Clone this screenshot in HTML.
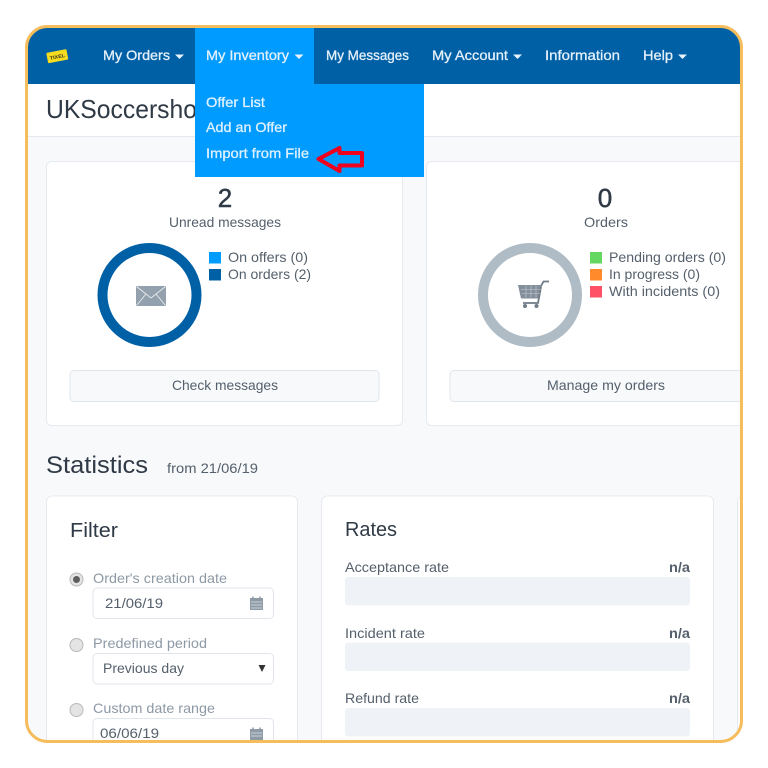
<!DOCTYPE html>
<html lang="en">
<head>
<meta charset="utf-8">
<title>My Inventory</title>
<style>
html,body{margin:0;padding:0;background:#fff;width:768px;height:768px;overflow:hidden}
svg{display:block}
text{font-family:"Liberation Sans",sans-serif}
.soft{filter:blur(.35px)}
.nav{fill:#e4f0fa;font-size:14px;stroke:#e4f0fa;stroke-width:.3px}
.sub{fill:#dff1ff;font-size:14px;stroke:#dff1ff;stroke-width:.3px}
.body{fill:#55606c;font-size:14px}
.lab{fill:#8d99a5;font-size:14px}
.dark{fill:#2f3a46}
.num{fill:#2f3a46;stroke:#2f3a46;stroke-width:.5px}
</style>
</head>
<body>
<svg width="768" height="768" viewBox="0 0 768 768" xmlns="http://www.w3.org/2000/svg">
<defs>
<clipPath id="frame"><rect x="26.500" y="26.500" width="715" height="715" rx="21"/></clipPath>
</defs>
<g clip-path="url(#frame)">
<g class="soft">
<rect x="25" y="25" width="718" height="718" fill="#f7f9fb"/>
<rect x="25" y="84" width="718" height="52" fill="#fff"/>
<rect x="25" y="136" width="718" height="1" fill="#e4e9f0"/>
<text x="46" y="118" font-size="26" class="dark" textLength="151" lengthAdjust="spacingAndGlyphs">UKSoccersho</text>

<!-- Nav -->
<rect x="25" y="25" width="718" height="59" fill="#0060a6"/>
<rect x="195" y="25" width="119" height="59" fill="#009bff"/>
<g transform="rotate(-11 57 56)">
<rect x="47" y="51" width="20.500" height="10.500" rx="1" fill="#f6dc1e"/>
<text x="49.500" y="58.500" font-size="5" font-weight="700" fill="#3b3a20" textLength="15.500" lengthAdjust="spacingAndGlyphs">TIXEL</text>
</g>
<text x="103" y="60" class="nav" textLength="67" lengthAdjust="spacingAndGlyphs">My Orders</text>
<path d="M175 54.500h9l-4.500 4.500z" fill="#e9f3fb"/>
<text x="206" y="60" class="nav" textLength="83" lengthAdjust="spacingAndGlyphs">My Inventory</text>
<path d="M294.500 54.500h9l-4.500 4.500z" fill="#e9f3fb"/>
<text x="326" y="60" class="nav" textLength="83" lengthAdjust="spacingAndGlyphs">My Messages</text>
<text x="432" y="60" class="nav" textLength="76" lengthAdjust="spacingAndGlyphs">My Account</text>
<path d="M513 54.500h9l-4.500 4.500z" fill="#e9f3fb"/>
<text x="545" y="60" class="nav" textLength="75" lengthAdjust="spacingAndGlyphs">Information</text>
<text x="643" y="60" class="nav" textLength="30" lengthAdjust="spacingAndGlyphs">Help</text>
<path d="M678 54.500h9l-4.500 4.500z" fill="#e9f3fb"/>

<!-- Card 1 -->
<rect x="46.500" y="161.500" width="356" height="264" rx="5" fill="#fff" stroke="#e6eaf0"/>
<!-- Dropdown -->
<rect x="195" y="84" width="229" height="93" fill="#009bff"/>
<text x="206" y="107" class="sub" textLength="59" lengthAdjust="spacingAndGlyphs">Offer List</text>
<text x="206" y="132" class="sub" textLength="81" lengthAdjust="spacingAndGlyphs">Add an Offer</text>
<text x="206" y="158" class="sub" textLength="103" lengthAdjust="spacingAndGlyphs">Import from File</text>
<path d="M318.500 159L339.500 148V153H362V165.500H339.500V171z" fill="none" stroke="#f0001c" stroke-width="4" stroke-linejoin="round"/>

<text x="225" y="207" font-size="26" text-anchor="middle" class="num">2</text>
<text x="169" y="227" class="body" textLength="112" lengthAdjust="spacingAndGlyphs">Unread messages</text>
<circle cx="149.500" cy="295" r="47" fill="none" stroke="#0060a6" stroke-width="10"/>
<rect x="136" y="286" width="30" height="20" fill="#93a1ae"/>
<path d="M136.500 286.500L151 298L165.500 286.500M136.500 305.500L146 294M165.500 305.500L156 294" fill="none" stroke="#eef1f4" stroke-width=".8"/>
<rect x="209" y="252" width="12" height="11.500" fill="#009bff"/>
<rect x="209" y="269" width="12" height="11.500" fill="#0060a6"/>
<text x="228" y="262" class="body" textLength="80" lengthAdjust="spacingAndGlyphs">On offers (0)</text>
<text x="228" y="279" class="body" textLength="83" lengthAdjust="spacingAndGlyphs">On orders (2)</text>
<rect x="70" y="370.500" width="309" height="31" rx="4" fill="#f7f9fb" stroke="#e1e6ec"/>
<text x="172" y="390" class="body" textLength="106" lengthAdjust="spacingAndGlyphs">Check messages</text>

<!-- Card 2 -->
<rect x="426.500" y="161.500" width="340" height="264" rx="5" fill="#fff" stroke="#e6eaf0"/>
<text x="605" y="207" font-size="26" text-anchor="middle" class="num">0</text>
<text x="584" y="227" class="body" textLength="44" lengthAdjust="spacingAndGlyphs">Orders</text>
<circle cx="530" cy="295" r="47" fill="none" stroke="#b0bcc5" stroke-width="10"/>
<path d="M518 285H542L539.500 298.500H521z" fill="#848f9b"/>
<path d="M541 286L543.500 281.500H549M541 287L538 303H523" fill="none" stroke="#6f7b87" stroke-width="1.800"/>
<path d="M521 289.500h20M522 293.500h18M526 285.500v12M531 285.500v12M536 285.500v12" stroke="#c3ccd4" stroke-width=".6" fill="none"/>
<circle cx="525" cy="306" r="2" fill="#6f7b87"/><circle cx="536.500" cy="306" r="2" fill="#6f7b87"/>
<rect x="590" y="252" width="12" height="11.500" fill="#63d75f"/>
<rect x="590" y="269" width="12" height="11.500" fill="#ff8a2b"/>
<rect x="590" y="286" width="12" height="11.500" fill="#ff5068"/>
<text x="609" y="262" class="body" textLength="117" lengthAdjust="spacingAndGlyphs">Pending orders (0)</text>
<text x="609" y="279" class="body" textLength="91" lengthAdjust="spacingAndGlyphs">In progress (0)</text>
<text x="609" y="296" class="body" textLength="111" lengthAdjust="spacingAndGlyphs">With incidents (0)</text>
<rect x="450" y="370.500" width="320" height="31" rx="4" fill="#f7f9fb" stroke="#e1e6ec"/>
<text x="547" y="390" class="body" textLength="118" lengthAdjust="spacingAndGlyphs">Manage my orders</text>

<!-- Statistics -->
<text x="46" y="473" font-size="24" class="dark" textLength="102" lengthAdjust="spacingAndGlyphs">Statistics</text>
<text x="167" y="473" class="body" textLength="91" lengthAdjust="spacingAndGlyphs">from 21/06/19</text>

<!-- Filter -->
<rect x="46.500" y="496" width="251" height="270" rx="6" fill="#fff" stroke="#e6eaf0"/>
<text x="70" y="537" font-size="20" class="dark" textLength="48" lengthAdjust="spacingAndGlyphs">Filter</text>
<circle cx="76.500" cy="579.500" r="6.500" fill="#e4e4e4" stroke="#b8b8b8"/>
<circle cx="76.500" cy="579.500" r="3.500" fill="#5f5f5f"/>
<text x="93" y="583" class="lab" textLength="134" lengthAdjust="spacingAndGlyphs">Order's creation date</text>
<rect x="93" y="588" width="180.500" height="30.500" rx="4" fill="#fff" stroke="#e1e6ec"/>
<text x="105" y="608" class="body" textLength="58" lengthAdjust="spacingAndGlyphs">21/06/19</text>
<rect x="250" y="598" width="13" height="12" fill="#8e9aa6"/>
<path d="M253 596.500v3M260 596.500v3" stroke="#8e9aa6" stroke-width="1.500"/>
<path d="M251 602h11M251 605h11M251 608h11" stroke="#dfe4e9" stroke-width=".7"/>
<circle cx="76.500" cy="645" r="6.500" fill="#e4e4e4" stroke="#b8b8b8"/>
<text x="93" y="648" class="lab" textLength="114" lengthAdjust="spacingAndGlyphs">Predefined period</text>
<rect x="93" y="653.500" width="180.500" height="30.500" rx="4" fill="#fff" stroke="#e1e6ec"/>
<text x="103" y="673" class="body" textLength="81" lengthAdjust="spacingAndGlyphs">Previous day</text>
<path d="M258.500 665h7l-3.500 7z" fill="#333"/>
<circle cx="76.500" cy="710" r="6.500" fill="#e4e4e4" stroke="#b8b8b8"/>
<text x="93" y="713" class="lab" textLength="122" lengthAdjust="spacingAndGlyphs">Custom date range</text>
<rect x="93" y="718.500" width="180.500" height="40" rx="4" fill="#fff" stroke="#e1e6ec"/>
<text x="100" y="738" class="body" textLength="59" lengthAdjust="spacingAndGlyphs">06/06/19</text>
<rect x="250" y="729" width="13" height="12" fill="#8e9aa6"/>
<path d="M253 727.500v3M260 727.500v3" stroke="#8e9aa6" stroke-width="1.500"/>
<path d="M251 733h11M251 736h11" stroke="#dfe4e9" stroke-width=".7"/>

<!-- Rates -->
<rect x="321.500" y="496" width="392" height="270" rx="6" fill="#fff" stroke="#e6eaf0"/>
<text x="345" y="536" font-size="20" class="dark" textLength="52" lengthAdjust="spacingAndGlyphs">Rates</text>
<text x="345" y="572" class="body" textLength="104" lengthAdjust="spacingAndGlyphs">Acceptance rate</text>
<text x="669" y="572" class="body" font-weight="700" textLength="21" lengthAdjust="spacingAndGlyphs">n/a</text>
<rect x="345" y="577" width="345" height="28.500" rx="3" fill="#eff3f7"/>
<text x="345" y="638" class="body" textLength="80" lengthAdjust="spacingAndGlyphs">Incident rate</text>
<text x="669" y="638" class="body" font-weight="700" textLength="21" lengthAdjust="spacingAndGlyphs">n/a</text>
<rect x="345" y="642.500" width="345" height="28.500" rx="3" fill="#eff3f7"/>
<text x="345" y="703" class="body" textLength="74" lengthAdjust="spacingAndGlyphs">Refund rate</text>
<text x="669" y="703" class="body" font-weight="700" textLength="21" lengthAdjust="spacingAndGlyphs">n/a</text>
<rect x="345" y="708" width="345" height="28.500" rx="3" fill="#eff3f7"/>
<rect x="737.500" y="496" width="40" height="270" rx="6" fill="#fff" stroke="#e6eaf0"/>
</g>
</g>
<rect x="26.500" y="26.500" width="715" height="715" rx="21" fill="none" stroke="#f6bd5c" stroke-width="3"/>
</svg>
</body>
</html>
